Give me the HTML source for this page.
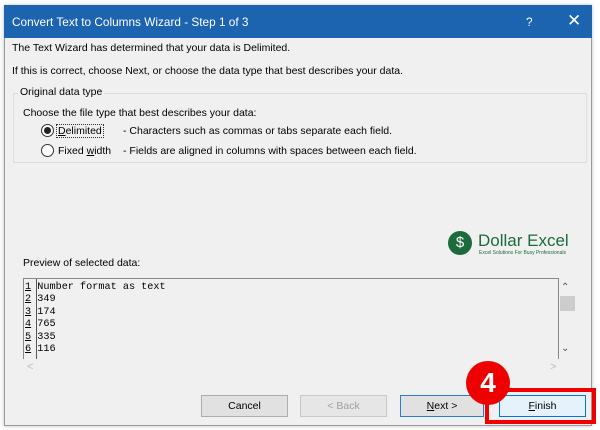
<!DOCTYPE html>
<html><head><style>
*{margin:0;padding:0;box-sizing:border-box}
body{width:600px;height:430px;background:#fff;position:relative;overflow:hidden;font-family:"Liberation Sans",sans-serif;font-size:10.5px;color:#000}
.a{position:absolute}
.dlg{left:4px;top:5px;width:588px;height:421px;background:#f0f0f0;border:1px solid #9a9a9a;box-shadow:0 0 4px rgba(0,0,0,.25)}
.title{left:4px;top:5px;width:588px;height:33px;background:#1c63b0;color:#fff;font-size:11.8px}
.mono{font-family:"Liberation Mono",monospace;font-size:10.2px}
.btn{height:22px;border:1px solid #adadad;background:#e1e1e1;text-align:center;line-height:20px;font-size:10.5px}
.rad{width:13px;height:13px;border:1px solid #333;border-radius:50%;background:#fff}
</style></head><body>
<div class="a dlg"></div>
<div class="a title"><span class="a" style="left:8px;top:10px">Convert Text to Columns Wizard - Step 1 of 3</span><span class="a" style="left:522px;top:10px">?</span><span class="a" style="left:563px;top:6px;font-size:17px">✕</span></div>
<div class="a" style="left:12px;top:42px">The Text Wizard has determined that your data is Delimited.</div>
<div class="a" style="left:12px;top:65px">If this is correct, choose Next, or choose the data type that best describes your data.</div>
<div class="a" style="left:13px;top:93px;width:574px;height:70px;border:1px solid #dcdcdc"></div>
<div class="a" style="left:18px;top:86px;background:#f0f0f0;padding:0 2px">Original data type</div>
<div class="a" style="left:23px;top:107px">Choose the file type that best describes your data:</div>
<div class="a rad" style="left:41px;top:124px"><div class="a" style="left:2px;top:2px;width:7px;height:7px;border-radius:50%;background:#222"></div></div>
<div class="a" style="left:56px;top:124px;border:1px dotted #333;padding:0 1px"><u>D</u>elimited</div>
<div class="a" style="left:123px;top:125px">- Characters such as commas or tabs separate each field.</div>
<div class="a rad" style="left:41px;top:144px"></div>
<div class="a" style="left:58px;top:145px">Fixed <u>w</u>idth</div>
<div class="a" style="left:123px;top:145px">- Fields are aligned in columns with spaces between each field.</div>
<div class="a" style="left:448px;top:231px;width:24px;height:24px;border-radius:50%;background:#1b6b3c;color:#fff;text-align:center;line-height:24px;font-size:15px">$</div>
<div class="a" style="left:478px;top:231px;color:#1b6b3c;font-size:17px">Dollar Excel</div>
<div class="a" style="left:479px;top:250px;color:#1b6b3c;font-size:5px">Excel Solutions For Busy Professionals</div>
<div class="a" style="left:23px;top:257px">Preview of selected data:</div>
<div class="a" style="left:23px;top:278px;width:536px;height:81px;border:1px solid #888;border-bottom:none;background:#f0f0f0;overflow:hidden">
<div class="a" style="left:12px;top:0;width:1px;height:81px;background:#555"></div>
<div class="a mono" style="left:1px;top:3px;line-height:12.4px">
<div><u>1</u> Number format as text</div><div><u>2</u> 349</div><div><u>3</u> 174</div><div><u>4</u> 765</div><div><u>5</u> 335</div><div><u>6</u> 116</div></div>
</div>
<div class="a" style="left:561px;top:282px;color:#555;font-size:10px">&#8963;</div>
<div class="a" style="left:560px;top:296px;width:15px;height:15px;background:#cdcdcd"></div>
<div class="a" style="left:561px;top:343px;color:#555;font-size:10px">&#8964;</div>
<div class="a" style="left:27px;top:361px;color:#bbb;font-size:11px">&lt;</div>
<div class="a" style="left:550px;top:361px;color:#bbb;font-size:11px">&gt;</div>
<div class="a btn" style="left:201px;top:395px;width:87px">Cancel</div>
<div class="a btn" style="left:300px;top:395px;width:87px;color:#a0a0a0;border-color:#c8c8c8;background:#e6e6e6">&lt; Back</div>
<div class="a btn" style="left:400px;top:395px;width:84px;border-color:#2c7bd3"><u>N</u>ext &gt;</div>
<div class="a btn" style="left:499px;top:395px;width:87px;background:#e5f1fb;border-color:#0078d7"><u>F</u>inish</div>
<div class="a" style="left:485px;top:388px;width:111px;height:36px;border:4px solid #ee0000"></div>
<div class="a" style="left:466px;top:361px;width:44px;height:44px;border-radius:50%;background:#ee0000;color:#fff;font-weight:bold;font-size:28px;text-align:center;line-height:44px">4</div>
</body></html>
